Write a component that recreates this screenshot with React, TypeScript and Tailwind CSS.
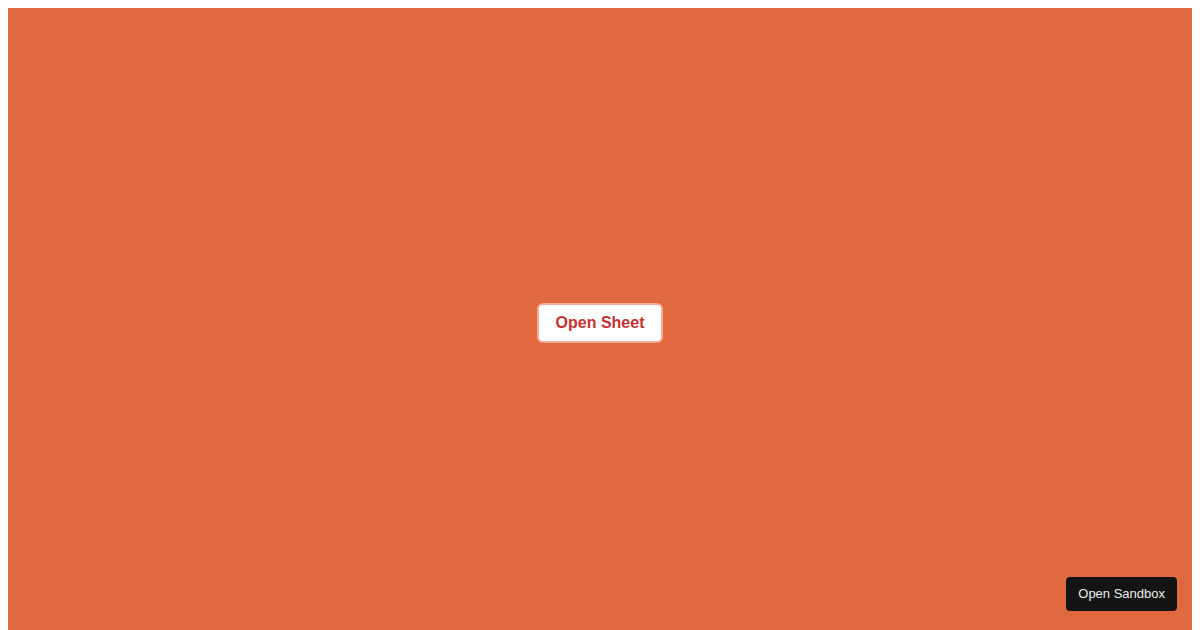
import React from "react";

export default function App() {
  return (
    <div className="bg-white p-2 font-['Liberation_Sans',Arial,sans-serif]">
      <div className="h-screen bg-[#e0693f] flex items-center justify-center">
        <button className="h-[40px] px-[17px] bg-white border-2 border-[#f6ab9b] rounded-md text-[16px] font-bold text-[#c9302f]">
          Open Sheet
        </button>
      </div>
      <button className="fixed right-[23px] bottom-[19px] h-[34px] px-3 bg-[#141414] rounded text-[13px] text-[#ececec]">
        Open Sandbox
      </button>
    </div>
  );
}
